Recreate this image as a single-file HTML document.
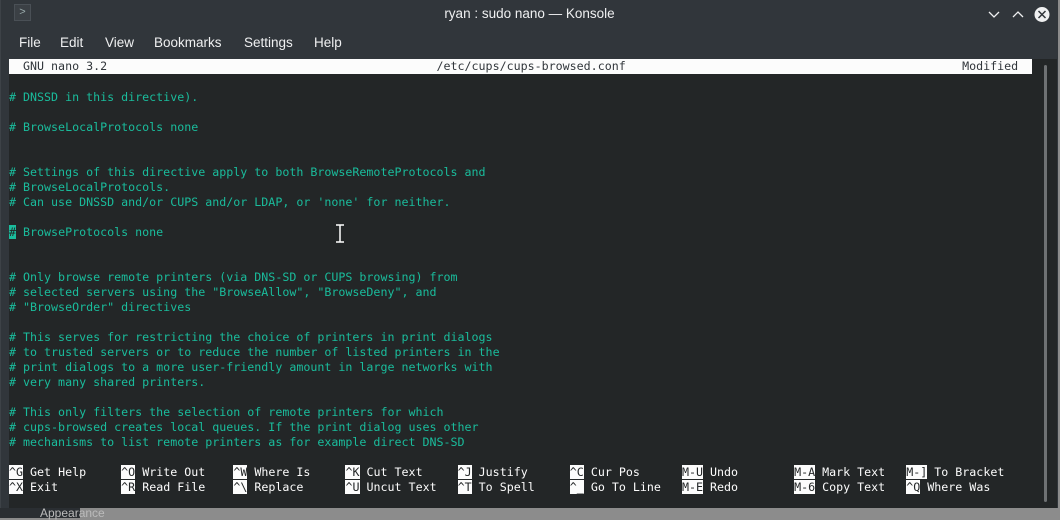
<!DOCTYPE html>
<html><head><style>
*{margin:0;padding:0;box-sizing:border-box}
body{width:1060px;height:518px;overflow:hidden;background:#8c8c8c;position:relative;font-family:"Liberation Sans","DejaVu Sans",sans-serif}
.win{position:absolute;left:0;top:0;width:1058px;height:508px;background:#31363b;border-left:1px solid #3d4247}
.title{position:absolute;top:0;left:0;width:100%;height:28px;text-align:center;color:#eff0f1;font-size:13.5px;line-height:28px}
.menu{position:absolute;top:35px;left:0;color:#eff0f1;font-size:13.5px}
.menu span{position:absolute;white-space:nowrap}
.term{position:absolute;left:8px;top:59px;width:1048px;height:449px;background:#232627}
.row{position:absolute;left:0;height:15px;font-family:"DejaVu Sans Mono",monospace;font-size:11.65px;line-height:16px;white-space:pre;color:#1abc9c}
.hdr{background:#fcfcfc;color:#31363b;width:1023px;line-height:15px;height:15px}
.k{background:#fcfcfc;color:#232627}
.l{color:#fcfcfc}
.cur{background:#1abc9c;color:#232627}
.sb{position:absolute;left:1043px;top:65px;width:3px;height:437px;background:#6e7173;border-radius:2px}
.icon{position:absolute;left:13px;top:4px;width:17px;height:17px;background:#3b4045;border:1px solid #4a5056;color:#9aa;font-size:11px;line-height:15px;text-align:center}
</style></head><body>
<div style="position:absolute;left:0;top:508px;width:80px;height:10px;background:#2a2e32"></div>
<div style="position:absolute;left:40px;top:506px;color:#bbb;font-size:12px">Appearance</div>
<div class="win">
<div class="icon">&gt;</div>
<div class="title">ryan : sudo nano — Konsole</div>
<svg style="position:absolute;left:984px;top:7px" width="70" height="16">
<path d="M4 5l5 5 5-5" stroke="#eff0f1" stroke-width="1.3" fill="none"/>
<path d="M28 10l5-5 5 5" stroke="#eff0f1" stroke-width="1.3" fill="none"/>
<circle cx="57" cy="7.5" r="7.5" fill="#eff0f1"/>
<path d="M53.5 4l7 7M60.5 4l-7 7" stroke="#31363b" stroke-width="1.5"/>
</svg>
<div class="menu"><span style="left:18px">File</span><span style="left:59px">Edit</span><span style="left:104px">View</span><span style="left:153px">Bookmarks</span><span style="left:243px">Settings</span><span style="left:313px">Help</span></div>
<div class="term">
<div class="row hdr" style="top:0">  GNU nano 3.2                                               /etc/cups/cups-browsed.conf                                                Modified</div>
<div class="row" style="top:30px"># DNSSD in this directive).</div>
<div class="row" style="top:60px"># BrowseLocalProtocols none</div>
<div class="row" style="top:105px"># Settings of this directive apply to both BrowseRemoteProtocols and</div>
<div class="row" style="top:120px"># BrowseLocalProtocols.</div>
<div class="row" style="top:135px"># Can use DNSSD and/or CUPS and/or LDAP, or 'none' for neither.</div>
<div class="row" style="top:165px"><span class="cur">#</span> BrowseProtocols none</div>
<div class="row" style="top:210px"># Only browse remote printers (via DNS-SD or CUPS browsing) from</div>
<div class="row" style="top:225px"># selected servers using the "BrowseAllow", "BrowseDeny", and</div>
<div class="row" style="top:240px"># "BrowseOrder" directives</div>
<div class="row" style="top:270px"># This serves for restricting the choice of printers in print dialogs</div>
<div class="row" style="top:285px"># to trusted servers or to reduce the number of listed printers in the</div>
<div class="row" style="top:300px"># print dialogs to a more user-friendly amount in large networks with</div>
<div class="row" style="top:315px"># very many shared printers.</div>
<div class="row" style="top:345px"># This only filters the selection of remote printers for which</div>
<div class="row" style="top:360px"># cups-browsed creates local queues. If the print dialog uses other</div>
<div class="row" style="top:375px"># mechanisms to list remote printers as for example direct DNS-SD</div>
<div class="row l" style="top:405px"><span class="k">^G</span> Get Help     <span class="k">^O</span> Write Out    <span class="k">^W</span> Where Is     <span class="k">^K</span> Cut Text     <span class="k">^J</span> Justify      <span class="k">^C</span> Cur Pos      <span class="k">M-U</span> Undo        <span class="k">M-A</span> Mark Text   <span class="k">M-]</span> To Bracket</div>
<div class="row l" style="top:420px"><span class="k">^X</span> Exit         <span class="k">^R</span> Read File    <span class="k">^\</span> Replace      <span class="k">^U</span> Uncut Text   <span class="k">^T</span> To Spell     <span class="k">^_</span> Go To Line   <span class="k">M-E</span> Redo        <span class="k">M-6</span> Copy Text   <span class="k">^Q</span> Where Was</div>
</div>
<div class="sb"></div>
<svg style="position:absolute;left:334px;top:224px" width="10" height="19"><path d="M1 1h8M5 1v17M1 18h8" stroke="#fff" stroke-width="1.5"/></svg>
</div>
</body></html>
